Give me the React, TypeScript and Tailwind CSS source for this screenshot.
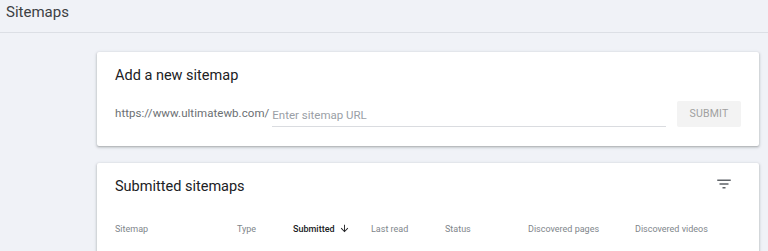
import React from 'react';

const columns = [
  { label: 'Sitemap', width: 'w-[122px]' },
  { label: 'Type', width: 'w-[56px]' },
  { label: 'Submitted', width: 'w-[78px]', active: true },
  { label: 'Last read', width: 'w-[74px]' },
  { label: 'Status', width: 'w-[83px]' },
  { label: 'Discovered pages', width: 'w-[107px]' },
  { label: 'Discovered videos', width: 'flex-1' },
];

const FilterIcon = () => (
  <svg width="18" height="18" viewBox="0 0 24 24" fill="#5f6368">
    <path d="M10 18h4v-2h-4v2zM3 6v2h18V6H3zm3 7h12v-2H6v2z" />
  </svg>
);

const ArrowDown = () => (
  <svg width="11" height="11" viewBox="0 0 24 24" fill="#202124">
    <path d="M20 12l-1.41-1.41L13 16.17V4h-2v12.17l-5.58-5.59L4 12l8 8 8-8z" />
  </svg>
);

export default function App() {
  return (
    <div className="w-full h-[251px] overflow-hidden bg-[#f0f2f7] font-['Roboto',_'Liberation_Sans',_sans-serif]">
      {/* Page header */}
      <div className="h-[33px] border-b border-[#dcdfe5] px-[6px] flex items-center">
        <h1 className="text-[15px] leading-[20px] text-[#3c4043] -mt-[8px]">Sitemaps</h1>
      </div>

      <div className="pl-[97px] pr-[9px] pt-[19px] flex flex-col gap-[17px]">
        {/* Add sitemap card */}
        <div className="h-[94px] bg-white rounded-[2px] shadow-[0_1px_2px_rgba(60,64,67,0.3),0_1px_3px_1px_rgba(60,64,67,0.12)] px-[18px] pt-[14px]">
          <h2 className="text-[14.5px] leading-[20px] text-[#202124]">Add a new sitemap</h2>
          <div className="mt-[15px] h-[26px] flex items-center">
            <span className="text-[11.5px] text-[#6b6f73] whitespace-nowrap tracking-[0.05px]">https://www.ultimatewb.com/</span>
            <input
              className="ml-[3px] flex-1 h-[24px] mt-[2px] border-b border-[#dadce0] outline-none text-[11.5px] text-[#202124] placeholder:text-[#9aa0a6] bg-transparent"
              placeholder="Enter sitemap URL"
            />
            <button className="ml-[11px] w-[64px] h-[26px] rounded-[2px] bg-[#f3f3f3] text-[10.5px] text-[#a0a0a0] tracking-[0.2px]">
              SUBMIT
            </button>
          </div>
        </div>

        {/* Submitted sitemaps card */}
        <div className="h-[120px] bg-white rounded-[2px] shadow-[0_1px_2px_rgba(60,64,67,0.3),0_1px_3px_1px_rgba(60,64,67,0.12)] pl-[18px] pt-[14px]">
          <div className="flex items-start justify-between pr-[26px]">
            <h2 className="text-[14.5px] leading-[20px] text-[#202124]">Submitted sitemaps</h2>
            <div className="-mt-[2px]">
              <FilterIcon />
            </div>
          </div>
          <div className="mt-[17px] h-[32px] flex items-center">
            {columns.map(col => (
              <div
                key={col.label}
                className={`${col.width} flex items-center gap-[4px] text-[9px] whitespace-nowrap ${
                  col.active ? 'text-[#202124] font-medium' : 'text-[#80868b]'
                }`}
              >
                {col.label}
                {col.active && (
                  <span className="-mt-[3px]">
                    <ArrowDown />
                  </span>
                )}
              </div>
            ))}
          </div>
        </div>
      </div>
    </div>
  );
}
